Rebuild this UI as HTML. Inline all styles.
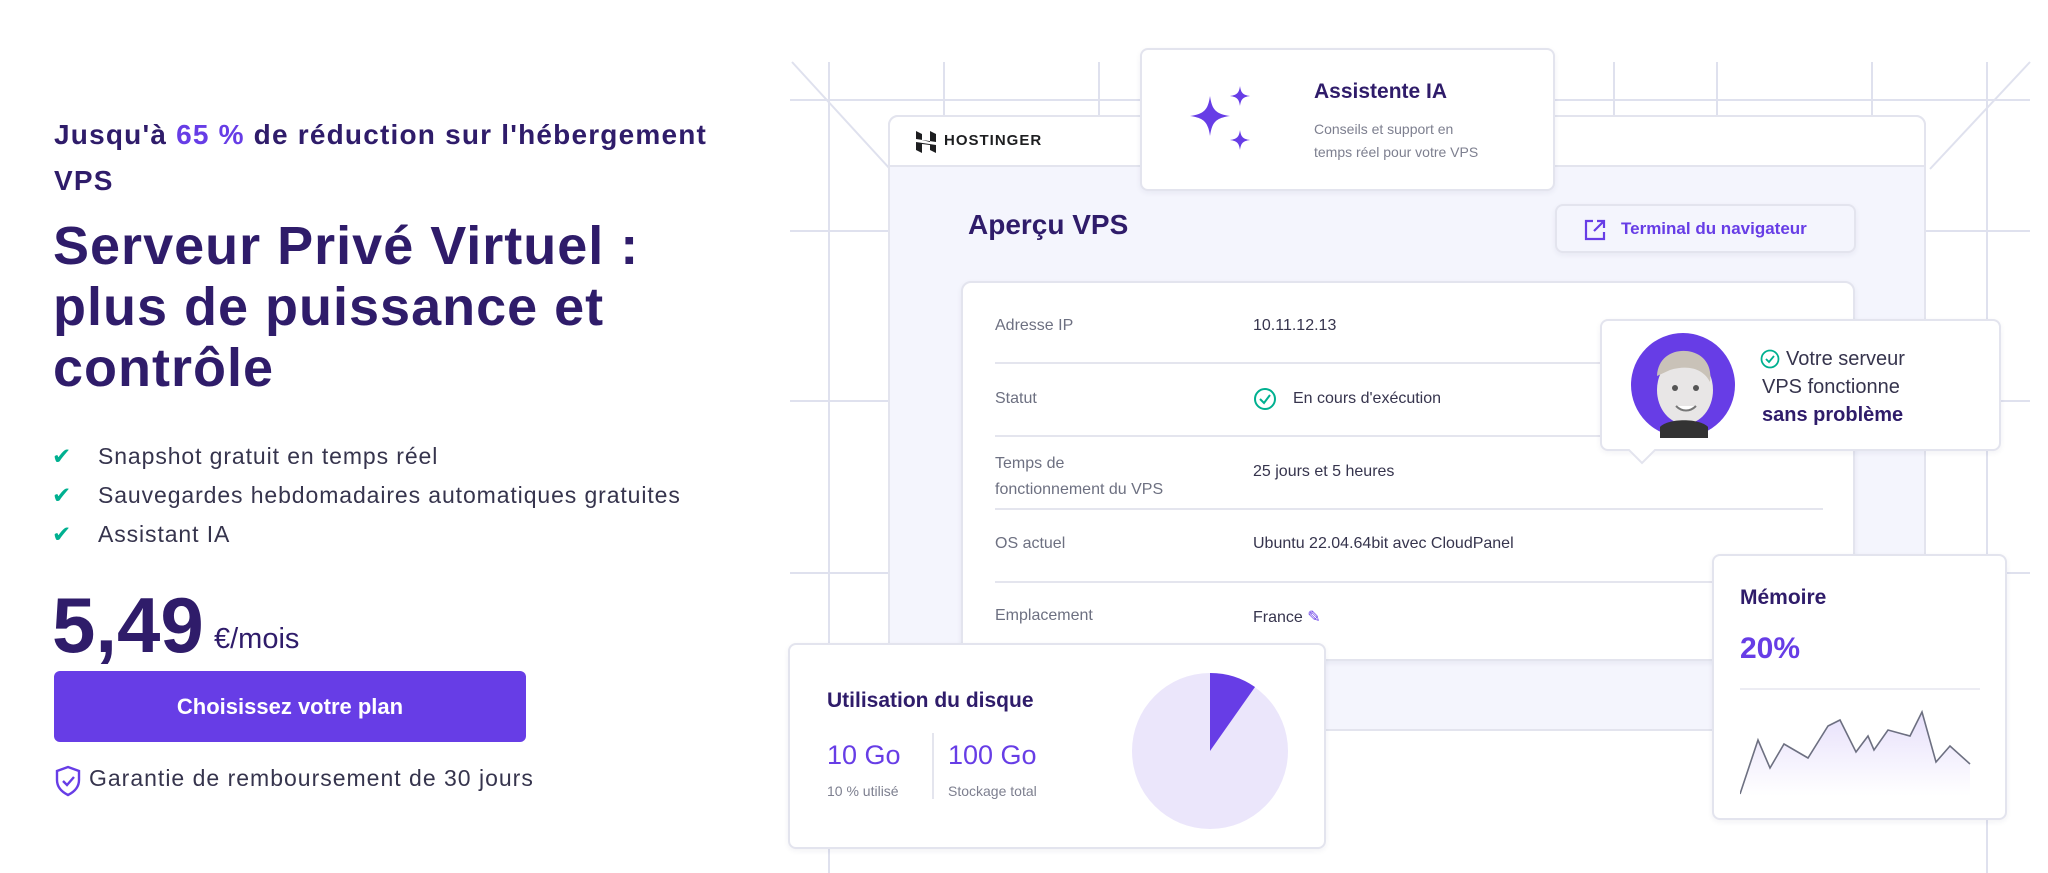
<!DOCTYPE html>
<html><head><meta charset="utf-8"><style>
*{margin:0;padding:0;box-sizing:border-box}
body{width:2048px;height:873px;background:#fff;position:relative;overflow:hidden;font-family:"Liberation Sans",sans-serif;color:#2f1c6a}
.a{position:absolute;white-space:nowrap}
.card{position:absolute;background:#fff;border:2px solid #e3e4ee;border-radius:8px;box-shadow:0 2px 6px rgba(40,40,90,.06)}
.lbl{position:absolute;left:32px;font-size:16px;color:#6d7081}
.val{position:absolute;left:290px;font-size:16px;color:#36344d}
.hr{position:absolute;left:32px;right:30px;height:2px;background:#e4e5ee}
</style></head><body>

<div class="a" style="left:54px;top:112px;font-size:28px;letter-spacing:1.2px;font-weight:bold;line-height:46px;color:#2f1c6a">Jusqu'à <span style="color:#673de6">65 %</span> de réduction sur l'hébergement<br>VPS</div>
<div class="a" style="left:53px;top:216px;font-size:54px;letter-spacing:1px;font-weight:bold;line-height:61px;color:#2f1c6a">Serveur Privé Virtuel :<br>plus de puissance et<br>contrôle</div>

<div class="a" style="left:52px;top:437px;font-size:23px;letter-spacing:0.9px;line-height:39px;color:#36344d">
<div><span style="color:#00b090;display:inline-block;width:46px;letter-spacing:0">✔</span>Snapshot gratuit en temps réel</div>
<div><span style="color:#00b090;display:inline-block;width:46px;letter-spacing:0">✔</span>Sauvegardes hebdomadaires automatiques gratuites</div>
<div><span style="color:#00b090;display:inline-block;width:46px;letter-spacing:0">✔</span>Assistant IA</div>
</div>

<div class="a" style="left:52px;top:582px;font-size:78px;font-weight:bold;line-height:86px;color:#2f1c6a">5,49</div>
<div class="a" style="left:214px;top:623px;font-size:29px;color:#2f1c6a">€/mois</div>

<div class="a" style="left:54px;top:671px;width:472px;height:71px;background:#673de6;border-radius:6px;color:#fff;font-size:22px;font-weight:bold;text-align:center;line-height:71px">Choisissez votre plan</div>

<svg class="a" style="left:54px;top:765px" width="28" height="32" viewBox="0 0 28 32"><path d="M14 2 L25 6 V15 C25 22 20 27 14 30 C8 27 3 22 3 15 V6 Z" fill="none" stroke="#673de6" stroke-width="2.4"/><path d="M9 16 L13 20 L20 12" fill="none" stroke="#673de6" stroke-width="2.4"/></svg>
<div class="a" style="left:89px;top:765px;font-size:23px;letter-spacing:1px;color:#36344d">Garantie de remboursement de 30 jours</div>

<!-- grid -->
<svg class="a" style="left:780px;top:0" width="1268" height="873">
<g stroke="#dfe1ee" stroke-width="2" fill="none">
<line x1="10" y1="100" x2="1250" y2="100"/>
<line x1="10" y1="231" x2="1250" y2="231"/>
<line x1="10" y1="401" x2="1250" y2="401"/>
<line x1="10" y1="573" x2="1250" y2="573"/>
<line x1="49" y1="62" x2="49" y2="873"/>
<line x1="164" y1="62" x2="164" y2="120"/>
<line x1="319" y1="62" x2="319" y2="120"/>
<line x1="834" y1="62" x2="834" y2="120"/>
<line x1="937" y1="62" x2="937" y2="120"/>
<line x1="1092" y1="62" x2="1092" y2="120"/>
<line x1="1207" y1="62" x2="1207" y2="873"/>
<line x1="12" y1="62" x2="110" y2="169"/>
<line x1="1250" y1="62" x2="1150" y2="169"/>
</g></svg>

<!-- dashboard -->
<div class="a" style="left:888px;top:115px;width:1038px;height:616px;background:#f4f5fd;border:2px solid #e3e4ee;border-radius:10px"></div>
<div class="a" style="left:888px;top:115px;width:1038px;height:52px;background:#fff;border:2px solid #e3e4ee;border-radius:10px 10px 0 0"></div>
<svg class="a" style="left:914px;top:129px" width="24" height="26" viewBox="0 0 24 26"><path d="M2 2 L8 5 V11 L16 13 V2 L22 5 V13 L2 10 Z M2 13 L22 16 V24 L16 21 V16 L8 15 V24 L2 21 Z" fill="#1d1e20"/></svg>
<div class="a" style="left:944px;top:132px;font-size:15px;font-weight:bold;letter-spacing:1px;color:#1d1e20">HOSTINGER</div>

<div class="a" style="left:968px;top:209px;font-size:28px;font-weight:bold;color:#2f1c6a">Aperçu VPS</div>
<div class="card" style="left:1555px;top:204px;width:301px;height:49px;background:#f4f5fd">
<svg class="a" style="left:26px;top:12px" width="24" height="24" viewBox="0 0 24 24" fill="none" stroke="#673de6" stroke-width="2.2"><path d="M10 3 H3 V21 H21 V14"/><path d="M14 3 H21 V10 M21 3 L11 13"/></svg>
<div class="a" style="left:64px;top:13px;font-size:17px;font-weight:bold;color:#673de6">Terminal du navigateur</div>
</div>

<div class="card" style="left:961px;top:281px;width:894px;height:380px;border-radius:10px">
<div class="lbl" style="top:34px">Adresse IP</div><div class="val" style="top:34px">10.11.12.13</div>
<div class="hr" style="top:79px"></div>
<div class="lbl" style="top:107px">Statut</div>
<svg class="a" style="left:290px;top:104px" width="24" height="24" viewBox="0 0 24 24" fill="none" stroke="#00b090" stroke-width="2"><circle cx="12" cy="12" r="10"/><path d="M7 12 L11 16 L17 8"/></svg>
<div class="val" style="top:107px;left:330px">En cours d'exécution</div>
<div class="hr" style="top:152px"></div>
<div class="lbl" style="top:168px;line-height:26px">Temps de<br>fonctionnement du VPS</div><div class="val" style="top:180px">25 jours et 5 heures</div>
<div class="hr" style="top:225px"></div>
<div class="lbl" style="top:252px">OS actuel</div><div class="val" style="top:252px">Ubuntu 22.04.64bit avec CloudPanel</div>
<div class="hr" style="top:298px"></div>
<div class="lbl" style="top:324px">Emplacement</div><div class="val" style="top:324px">France <span style="color:#673de6">✎</span></div>
</div>

<!-- assistant card -->
<div class="card" style="left:1140px;top:48px;width:415px;height:143px">
<svg class="a" style="left:46px;top:36px" width="72" height="70" viewBox="0 0 72 70" fill="#673de6"><path d="M22 10 C24 24 28 28 42 30 C28 32 24 36 22 50 C20 36 16 32 2 30 C16 28 20 24 22 10Z"/><path d="M52 0 C53 7 55 9 62 10 C55 11 53 13 52 20 C51 13 49 11 42 10 C49 9 51 7 52 0Z"/><path d="M52 44 C53 51 55 53 62 54 C55 55 53 57 52 64 C51 57 49 55 42 54 C49 53 51 51 52 44Z"/></svg>
<div class="a" style="left:172px;top:30px;font-size:21px;font-weight:bold;color:#2f1c6a">Assistente IA</div>
<div class="a" style="left:172px;top:68px;font-size:14px;line-height:23px;color:#7d7f8f">Conseils et support en<br>temps réel pour votre VPS</div>
</div>

<!-- person card -->
<div class="card" style="left:1600px;top:319px;width:401px;height:132px">
<svg class="a" style="left:26px;top:128px" width="28" height="16"><path d="M0 0 L14 14 L28 0" fill="#fff" stroke="#e3e4ee" stroke-width="2"/></svg>
<svg class="a" style="left:28px;top:11px" width="106" height="106" viewBox="0 0 106 106"><circle cx="53" cy="53" r="52" fill="#673de6"/><ellipse cx="55" cy="58" rx="28" ry="34" fill="#e8e6e6"/><path d="M27 44 C28 22 48 16 62 20 C76 24 82 36 80 50 C74 38 60 32 40 38 Z" fill="#c9c2b8"/><path d="M30 95 C38 86 70 86 78 95 L78 106 L30 106Z" fill="#333"/><circle cx="45" cy="56" r="3" fill="#555"/><circle cx="66" cy="56" r="3" fill="#555"/><path d="M46 74 C52 80 60 80 66 74" stroke="#777" stroke-width="2" fill="#fff"/></svg>
<svg class="a" style="left:158px;top:28px" width="20" height="20" viewBox="0 0 20 20" fill="none" stroke="#00b090" stroke-width="1.8"><circle cx="10" cy="10" r="8.5"/><path d="M6 10 L9 13 L14 7"/></svg>
<div class="a" style="left:160px;top:24px;font-size:20px;line-height:28px;color:#36344d"><span style="padding-left:24px">Votre serveur</span><br>VPS fonctionne<br><b style="color:#2f1c6a">sans problème</b></div>
</div>

<!-- memory card -->
<div class="card" style="left:1712px;top:554px;width:295px;height:266px">
<div class="a" style="left:26px;top:30px;font-size:21px;font-weight:bold;color:#2f1c6a">Mémoire</div>
<div class="a" style="left:26px;top:76px;font-size:30px;font-weight:bold;color:#673de6">20%</div>
<div class="a" style="left:26px;top:132px;width:240px;height:2px;background:#ececf3"></div>
<svg class="a" style="left:26px;top:150px" width="245" height="90" viewBox="0 0 245 90"><defs><linearGradient id="g" x1="0" y1="0" x2="0" y2="1"><stop offset="0" stop-color="#e7e0fb"/><stop offset="1" stop-color="#fff"/></linearGradient></defs><path d="M0 88 L18 34 L30 62 L44 38 L68 52 L88 20 L100 14 L116 46 L128 30 L134 44 L148 24 L170 30 L182 6 L196 56 L210 40 L230 58 L230 90 L0 90Z" fill="url(#g)"/><path d="M0 88 L18 34 L30 62 L44 38 L68 52 L88 20 L100 14 L116 46 L128 30 L134 44 L148 24 L170 30 L182 6 L196 56 L210 40 L230 58" fill="none" stroke="#6d7081" stroke-width="1.6"/></svg>
</div>

<!-- disk card -->
<div class="card" style="left:788px;top:643px;width:538px;height:206px">
<div class="a" style="left:37px;top:44px;font-size:21px;font-weight:bold;color:#2f1c6a">Utilisation du disque</div>
<div class="a" style="left:37px;top:95px;font-size:27px;color:#673de6">10 Go</div>
<div class="a" style="left:37px;top:138px;font-size:14px;color:#7d7f8f">10 % utilisé</div>
<div class="a" style="left:142px;top:88px;width:2px;height:66px;background:#e4e5ee"></div>
<div class="a" style="left:158px;top:95px;font-size:27px;color:#673de6">100 Go</div>
<div class="a" style="left:158px;top:138px;font-size:14px;color:#7d7f8f">Stockage total</div>
<svg class="a" style="left:340px;top:26px" width="160" height="160" viewBox="0 0 160 160"><circle cx="80" cy="80" r="78" fill="#ebe6fb"/><path d="M80 80 L80 2 A78 78 0 0 1 125 16 Z" fill="#673de6"/></svg>
</div>
</body></html>
